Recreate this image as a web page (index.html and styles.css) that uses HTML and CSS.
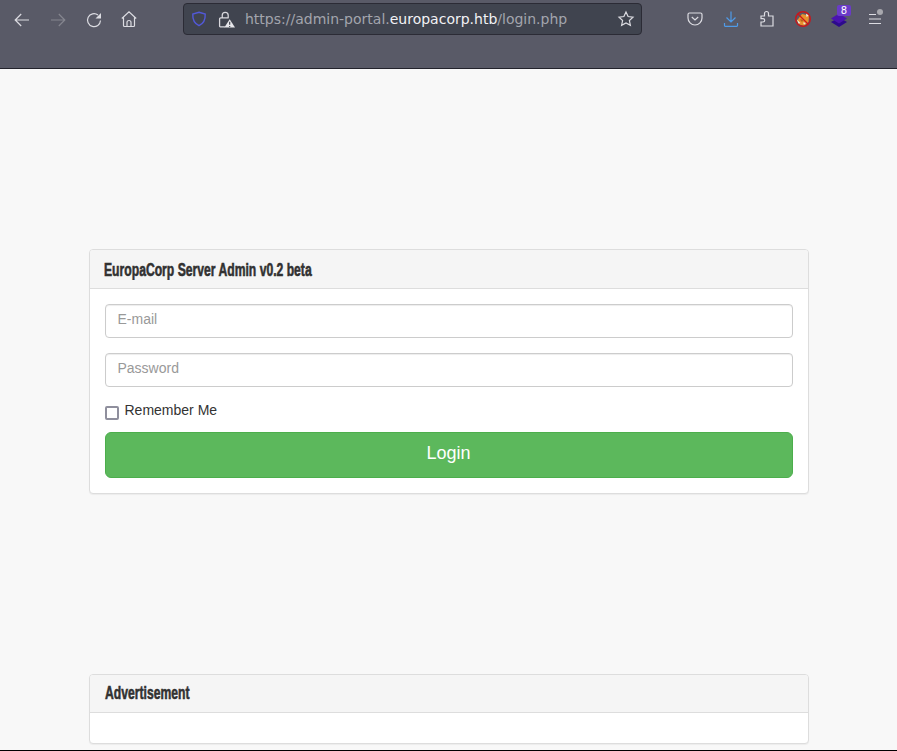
FILE: index.html
```html
<!DOCTYPE html>
<html lang="en">
<head>
<meta charset="utf-8">
<title>EuropaCorp Server Admin</title>
<link rel="stylesheet" href="styles.css">
</head>
<body>
<header class="chrome">
  <div class="nav">
    <svg class="ico" viewBox="0 0 18 18"><path d="M16 9H2.200M8.200 3 2.200 9l6 6"/></svg>
    <svg class="ico dim" viewBox="0 0 18 18"><path d="M2 9h13.800M9.800 3l6 6-6 6"/></svg>
    <svg class="ico" viewBox="0 0 18 18"><path d="M15.500 9.500A6.500 6.500 0 1 1 13 4"/><path class="fill" d="M16 2v5.500h-5.500z"/></svg>
    <svg class="ico home" viewBox="0 0 18 18"><path d="M1.800 8.500 9 1.800l7.200 6.700M3.500 7.500V15.500a1 1 0 0 0 1 1h9a1 1 0 0 0 1-1V7.500M7 16.500v-4a2 2 0 0 1 4 0v4"/></svg>
  </div>
  <div class="urlbar">
    <svg class="shield" viewBox="0 0 16 16"><path d="M8 1.300 14.200 3c.3 5.500-1.500 9.500-6.200 11.700C3.300 12.500 1.500 8.500 1.800 3z"/></svg>
    <svg class="lock" viewBox="0 0 16 16"><path class="ln" d="M4 6.500V4a2.800 2.800 0 0 1 5.600 0v2.500M6.500 15H2.500a1 1 0 0 1-1-1V7.500a1 1 0 0 1 1-1h7.500"/><path class="wn" d="M11 7.800 16 15.500H6z"/><path class="wk" d="M11 10v3M11 14v1"/></svg>
    <span class="url">https://admin-portal.<b>europacorp.htb</b>/login.php</span>
    <svg class="ico star" viewBox="0 0 18 18"><path d="m9 2 2.100 4.500 4.900.6-3.600 3.400 1 4.900L9 13l-4.400 2.400 1-4.900L2 7.100l4.900-.6z"/></svg>
  </div>
  <div class="tools">
    <svg class="ico" viewBox="0 0 18 18"><path d="M3.500 3h11A1.500 1.500 0 0 1 16 4.500v3.500a7 7 0 0 1-14 0V4.500A1.500 1.500 0 0 1 3.500 3zM5.800 7 9 10l3.200-3"/></svg>
    <svg class="ico blue" viewBox="0 0 18 18"><path d="M9 1.500V12M4.500 7.500 9 12l4.500-4.500M2.500 13V15.500a.8.800 0 0 0 .8.800h11.400a.8.800 0 0 0 .8-.8V13"/></svg>
    <svg class="ico" viewBox="0 0 18 18"><path d="M3 6.500h3.500V4a2 2 0 0 1 4 0v2.500H15v10H3v-4h2a1.700 1.700 0 0 0 0-3.400H3z" transform="translate(0 -.5)"/></svg>
    <svg class="addon" viewBox="0 0 18 18"><circle cx="9" cy="9" r="7" fill="#595a67"/><path d="M3 10.500 8 4l7 1.500-.5 6.500-4.500 4-4.500-1.500z" fill="#e8912e"/><path d="M12 3.500l3 2-2.500 1.500zM3 9.500l3.500 3.500-2 .8zM9 12.500l3 .2-2 2z" fill="#f3e8da"/><path d="M6 9.500q2-1 3.500 1.500l-2 .8z" fill="#b5601f"/><circle cx="9" cy="9" r="7.300" fill="none" stroke="#c9161c" stroke-width="1.400"/><path d="M4 4l10 10" stroke="#c9161c" stroke-width="1.300"/></svg>
    <div class="layers">
      <svg viewBox="0 0 18 18"><path d="M9 7.500 17 12 9 17 1 12z" fill="#2d0a8c"/><path d="M9 3.500 17 8.500 9 13.500 1 8.500z" fill="#4a14b0"/></svg>
      <span class="badge">8</span>
    </div>
    <div class="menu">
      <svg class="ico" viewBox="0 0 18 18"><path d="M3 4.500h7M3 9h12M3 13.500h12"/></svg>
      <span class="dot"></span>
    </div>
  </div>
</header>
<main class="page">
  <section class="panel login">
    <h1 class="panel-heading"><span class="squeeze">EuropaCorp Server Admin v0.2 beta</span></h1>
    <form class="panel-body">
      <input class="field" type="text" placeholder="E-mail">
      <input class="field" type="password" placeholder="Password">
      <label class="remember"><span class="box"></span>Remember Me</label>
      <button class="submit" type="button">Login</button>
    </form>
  </section>
  <section class="panel ad">
    <h2 class="panel-heading ad-heading"><span class="squeeze">Advertisement</span></h2>
    <div class="ad-body"></div>
  </section>
</main>
</body>
</html>
```
FILE: styles.css
```css
* { box-sizing: border-box; }
html, body { margin: 0; height: 751px; overflow: hidden; }
body { display: flex; flex-direction: column; background: #f8f8f8; font-family: "Liberation Sans", Arial, sans-serif; color: #333; }

.chrome { height: 69px; flex: none; background: #595a67; border-bottom: 1px solid #23232c; display: flex; align-items: flex-start; padding-top: 3px; }
.ico { width: 18px; height: 18px; fill: none; stroke: #dcdce2; stroke-width: 1.200; flex: none; }
.ico .fill { fill: #dcdce2; stroke: none; }
.ico.dim { stroke: #85868f; }
.ico.blue { stroke: #4f9be8; }
.nav { display: flex; align-items: center; height: 34px; padding-left: 13px; gap: 18px; width: 183px; }
.home { margin-left: -1px; transform: translateY(-1px); }
.urlbar { width: 459px; height: 32px; flex: none; background: #40444f; border: 1px solid #2b2b35; border-radius: 4px; display: flex; align-items: center; padding-left: 7px; padding-right: 6px; }
.shield { width: 16px; height: 16px; fill: none; stroke: #5259d8; stroke-width: 1.400; flex: none; }
.lock { width: 17px; height: 17px; margin-left: 11px; flex: none; }
.lock .ln { fill: none; stroke: #d8d8dd; stroke-width: 1.200; }
.lock .wn { fill: #e6e6ea; }
.lock .wk { fill: none; stroke: #40444f; stroke-width: 1.100; }
.url { font-family: "DejaVu Sans", sans-serif; font-size: 14px; color: #a3a5ad; margin-left: 10px; flex: 1; white-space: nowrap; }
.url b { font-weight: 400; color: #f2f2f5; }
.tools { display: flex; align-items: center; height: 32px; padding-left: 44px; gap: 18px; }
.addon { width: 18px; height: 18px; flex: none; }
.layers, .menu { position: relative; width: 18px; height: 18px; flex: none; }
.layers svg { width: 18px; height: 18px; display: block; }
.badge { position: absolute; top: -5px; left: 7px; width: 14px; height: 11px; background: #6a3bc8; border-radius: 2px; color: #fff; font: 10px/11px "DejaVu Sans", sans-serif; text-align: center; }
.dot { position: absolute; top: -1px; right: 1px; width: 6px; height: 6px; border-radius: 50%; background: #a8a8ae; }

.page { flex: 1; min-height: 0; border-bottom: 1px solid #000; overflow: hidden; display: flex; flex-direction: column; align-items: center; }
.panel { width: 720px; flex: none; background: #fff; border: 1px solid #ddd; border-radius: 4px; box-shadow: 0 1px 1px rgba(0,0,0,.05); }
.login { margin-top: 180px; }
.ad { margin-top: 180px; }
.panel-heading { margin: 0; height: 39px; padding: 11px 14px 0; background: #f5f5f5; border-bottom: 1px solid #ddd; border-radius: 3px 3px 0 0; font: 700 16px/18px "Liberation Sans", sans-serif; color: #333; white-space: nowrap; }
.squeeze { display: inline-block; transform: scaleX(.76) scaleY(1.1); transform-origin: left center; -webkit-text-stroke: .5px #2b2b2b; }
.ad-heading { height: 38px; padding: 10px 15px 0; }
.panel-body { padding: 15px; display: flex; flex-direction: column; }
.field { display: block; width: 100%; height: 34px; padding: 6px 12px 10px; margin-bottom: 15px; font: 14px/20px "Liberation Sans", sans-serif; color: #555; background: #fff; border: 1px solid #ccc; border-radius: 4px; box-shadow: inset 0 1px 1px rgba(0,0,0,.075); outline: none; }
.field::placeholder { color: #999; opacity: 1; }
.remember { display: flex; align-items: flex-start; font-size: 14px; line-height: 20px; height: 32px; margin-top: -2px; }
.box { width: 14px; height: 14px; margin: 6px 6px 0 0; background: #fff; border: 2px solid #8f8f9d; border-radius: 2px; flex: none; }
.submit { display: block; width: 100%; height: 46px; background: #5cb85c; border: 1px solid #4cae4c; border-radius: 6px; color: #fff; font: 18px/24px "Liberation Sans", sans-serif; text-align: center; padding: 0 0 4px; }
.ad-body { height: 30px; }
```
